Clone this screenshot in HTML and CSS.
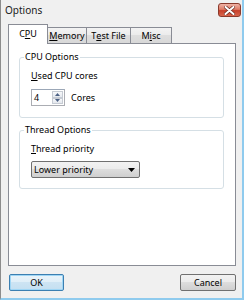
FILE: index.html
```html
<!DOCTYPE html>
<html>
<head>
    <title>Options</title>
    <link rel="stylesheet" href="styles.css">
</head>
<body>
<div class="window">
    <div class="titlebar">
        <span class="title">Options</span>
        <span class="close">
            <svg width="11" height="9" viewBox="0 0 11 9">
                <path d="M1.5 1 L9.5 8 M9.5 1 L1.5 8" stroke="#6b2a20" stroke-width="3.4" stroke-linecap="round"/>
                <path d="M1.5 1 L9.5 8 M9.5 1 L1.5 8" stroke="#ffffff" stroke-width="2" stroke-linecap="round"/>
            </svg>
        </span>
    </div>

    <div class="tabs">
        <span class="tab active tab-cpu">C<u>P</u>U</span>
        <span class="tab tab-mem"><u>M</u>emory</span>
        <span class="tab tab-test">T<u>e</u>st File</span>
        <span class="tab tab-misc">M<u>i</u>sc</span>
    </div>

    <div class="panel">
        <fieldset class="group">
            <legend>CPU Options</legend>
            <div class="label"><u>U</u>sed CPU cores</div>
            <div class="spin-row">
                <div class="spin">
                    <span class="spin-val">4</span>
                    <div class="spin-btns">
                        <span class="spin-btn"><svg width="5" height="3" viewBox="0 0 5 3"><path d="M0 3 L2.5 0 L5 3 Z" fill="#4d6185"/></svg></span>
                        <span class="spin-btn"><svg width="5" height="3" viewBox="0 0 5 3"><path d="M0 0 L2.5 3 L5 0 Z" fill="#4d6185"/></svg></span>
                    </div>
                </div>
                <span class="unit">Cores</span>
            </div>
        </fieldset>

        <fieldset class="group group-thread">
            <legend>Thread Options</legend>
            <div class="label"><u>T</u>hread priority</div>
            <div class="combo">
                <span>Lower priority</span>
                <svg width="7" height="4" viewBox="0 0 7 4"><path d="M0 0 L7 0 L3.5 4 Z" fill="#000"/></svg>
            </div>
        </fieldset>
    </div>

    <div class="buttons">
        <button class="btn btn-default">OK</button>
        <button class="btn">Cancel</button>
    </div>
</div>
</body>
</html>
```

FILE: styles.css
```css
body {
    margin: 0;
    font-family: "Noto Sans", "Open Sans", sans-serif;
    font-size: 9px;
    color: #000;
}
u {
    text-decoration: underline;
    text-underline-offset: 1px;
}
.window {
    width: 244px;
    height: 300px;
    box-sizing: border-box;
    background: #f0f0f0;
    border-left: 1px solid #8c8c8c;
    border-right: 2px solid #8fcbee;
    border-bottom: 2px solid #8fcbee;
    display: flex;
    flex-direction: column;
}
.titlebar {
    height: 24px;
    display: flex;
    justify-content: space-between;
    align-items: flex-start;
    padding: 0 1px 0 4px;
}
.title {
    font-size: 10px;
    color: #1b1b1b;
    margin-top: 3px;
}
.close {
    width: 23px;
    height: 14px;
    margin-top: 3px;
    box-sizing: border-box;
    border: 1px solid #8a3a2c;
    border-radius: 3px;
    background: linear-gradient(#efb3a6, #de7b66 45%, #c7402a 55%, #d8664d);
    display: flex;
    align-items: center;
    justify-content: center;
}
.tabs {
    height: 19px;
    display: flex;
    align-items: flex-end;
    padding-left: 7px;
}
.tab {
    box-sizing: border-box;
    height: 16px;
    border: 1px solid #898c95;
    border-bottom: none;
    border-left: none;
    background: linear-gradient(#f3f3f3, #ebebeb 50%, #dedede 50%, #d8d8d8);
    display: flex;
    align-items: center;
    justify-content: center;
    padding-bottom: 1px;
}
.tab.active {
    height: 20px;
    background: #fff;
    border-left: 1px solid #898c95;
    margin-bottom: -1px;
    position: relative;
    z-index: 1;
    padding-bottom: 2px;
}
.tab-cpu { width: 40px; }
.tab-mem { width: 39px; }
.tab-test { width: 44px; }
.tab-misc { width: 41px; }
.panel {
    margin-left: 7px;
    width: 228px;
    height: 223px;
    box-sizing: border-box;
    border: 1px solid #898c95;
    background: #fff;
    padding-top: 7px;
}
.group {
    margin: 0 11px 0 10px;
    padding: 0 0 11px 0;
    border: 1px solid #d5dfe5;
    border-radius: 3px;
}
.group legend {
    margin-left: 4px;
    padding: 0 1px;
    line-height: 12px;
}
.group-thread {
    margin-top: 6px;
    padding-bottom: 10px;
}
.label {
    margin: 7px 0 0 11px;
    line-height: 12px;
}
.spin-row {
    display: flex;
    align-items: center;
    margin: 7px 0 0 11px;
}
.spin {
    width: 34px;
    height: 17px;
    box-sizing: border-box;
    border: 1px solid #abadb3;
    border-top-color: #9ba7b7;
    background: #fff;
    display: flex;
    justify-content: space-between;
}
.spin-val {
    padding-left: 2px;
    line-height: 15px;
}
.spin-btns {
    width: 11px;
    display: flex;
    flex-direction: column;
    padding: 1px 1px 1px 0;
}
.spin-btn {
    flex: 1;
    box-sizing: border-box;
    border: 1px solid #c6cbd3;
    background: linear-gradient(#f7f8fa, #e4e8ee);
    display: flex;
    align-items: center;
    justify-content: center;
}
.unit {
    margin-left: 6px;
}
.combo {
    margin: 6px 0 0 11px;
    width: 109px;
    height: 17px;
    box-sizing: border-box;
    border: 1px solid #707070;
    border-radius: 2px;
    background: linear-gradient(#f2f2f2, #ebebeb 50%, #dddddd 50%, #cfcfcf);
    display: flex;
    align-items: center;
    justify-content: space-between;
    padding: 0 4px 0 2px;
}
.buttons {
    display: flex;
    justify-content: space-between;
    margin-top: 8px;
    padding: 0 6px 0 8px;
}
.btn {
    font: inherit;
    height: 17px;
    padding: 0;
    box-sizing: border-box;
    border: 1px solid #707070;
    border-radius: 2px;
    background: linear-gradient(#f2f2f2, #ebebeb 50%, #dddddd 50%, #cfcfcf);
    width: 56px;
}
.btn-default {
    width: 55px;
    border-color: #3c7fb1;
    box-shadow: inset 0 0 0 1px #9fd6f5;
    background: linear-gradient(#eaf4fa, #dfeef8 50%, #cde4f3 50%, #c4dff1);
}
```
